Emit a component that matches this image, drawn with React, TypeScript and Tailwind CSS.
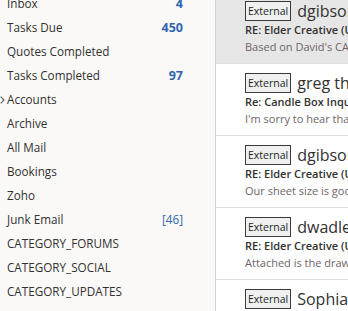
import React from 'react'

const folders: { name: string; count?: string; bold?: boolean; chevron?: boolean }[] = [
  { name: 'Inbox', count: '4', bold: true },
  { name: 'Tasks Due', count: '450', bold: true },
  { name: 'Quotes Completed' },
  { name: 'Tasks Completed', count: '97', bold: true },
  { name: 'Accounts', chevron: true },
  { name: 'Archive' },
  { name: 'All Mail' },
  { name: 'Bookings' },
  { name: 'Zoho' },
  { name: 'Junk Email', count: '[46]' },
  { name: 'CATEGORY_FORUMS' },
  { name: 'CATEGORY_SOCIAL' },
  { name: 'CATEGORY_UPDATES' },
]

const messages = [
  { from: 'dgibson', subject: 'RE: Elder Creative (UK)', preview: "Based on David's CAD", selected: true },
  { from: 'greg thomas', subject: 'Re: Candle Box Inquiry', preview: "I'm sorry to hear that" },
  { from: 'dgibson', subject: 'RE: Elder Creative (UK)', preview: 'Our sheet size is good' },
  { from: 'dwadley', subject: 'RE: Elder Creative (UK)', preview: 'Attached is the drawing' },
  { from: 'Sophia', subject: 'RE: Elder Creative (UK)', preview: 'Thanks' },
]

export default function App() {
  return (
    <div
      className="flex w-[348px] h-[311px] overflow-hidden bg-white"
      style={{ fontFamily: '"Open Sans", "Noto Sans", sans-serif' }}
    >
      {/* Folder pane */}
      <div className="w-[216px] shrink-0 bg-[#faf9f8] border-r border-[#d4d2d0]">
        <div className="-mt-[8px] w-[183px]">
          {folders.map(f => (
            <div key={f.name} className="relative flex items-center h-[24px] pl-[7px] text-[11.7px] text-[#323130]">
              {f.chevron && (
                <svg className="absolute left-0 top-[8px]" width="5" height="8" viewBox="0 0 5 8">
                  <path d="M0.7 0.7 L4 4 L0.7 7.3" fill="none" stroke="#605e5c" strokeWidth="1.1" />
                </svg>
              )}
              <span className="flex-1 whitespace-nowrap">{f.name}</span>
              {f.count && (
                <span className={`text-[#2f65b0] ${f.bold ? 'font-bold text-[12.5px]' : 'text-[11.7px]'}`}>{f.count}</span>
              )}
            </div>
          ))}
        </div>
      </div>

      {/* Message list */}
      <div className="flex-1 min-w-0 -mt-[8px]">
        {messages.map((m, i) => (
          <div
            key={i}
            className={`h-[72px] pl-[29px] pt-[9px] border-b border-[#e1dfdd] overflow-hidden ${m.selected ? 'bg-[#e6e6e6]' : 'bg-white'}`}
          >
            <div className="flex items-center h-[20px] whitespace-nowrap">
              <span className="h-[20px] px-[2px] border border-[#3b3a39] bg-[#f0f0f0] text-[10.5px] leading-[18px] text-[#201f1e]">
                External
              </span>
              <span className="ml-[6px] text-[16px] text-[#323130]">{m.from}</span>
            </div>
            <div className="h-[17px] leading-[17px] text-[11px] font-semibold text-[#323130] whitespace-nowrap">
              {m.subject}
            </div>
            <div className="h-[17px] leading-[17px] text-[11px] text-[#6e6469] whitespace-nowrap">
              {m.preview}
            </div>
          </div>
        ))}
      </div>
    </div>
  )
}
